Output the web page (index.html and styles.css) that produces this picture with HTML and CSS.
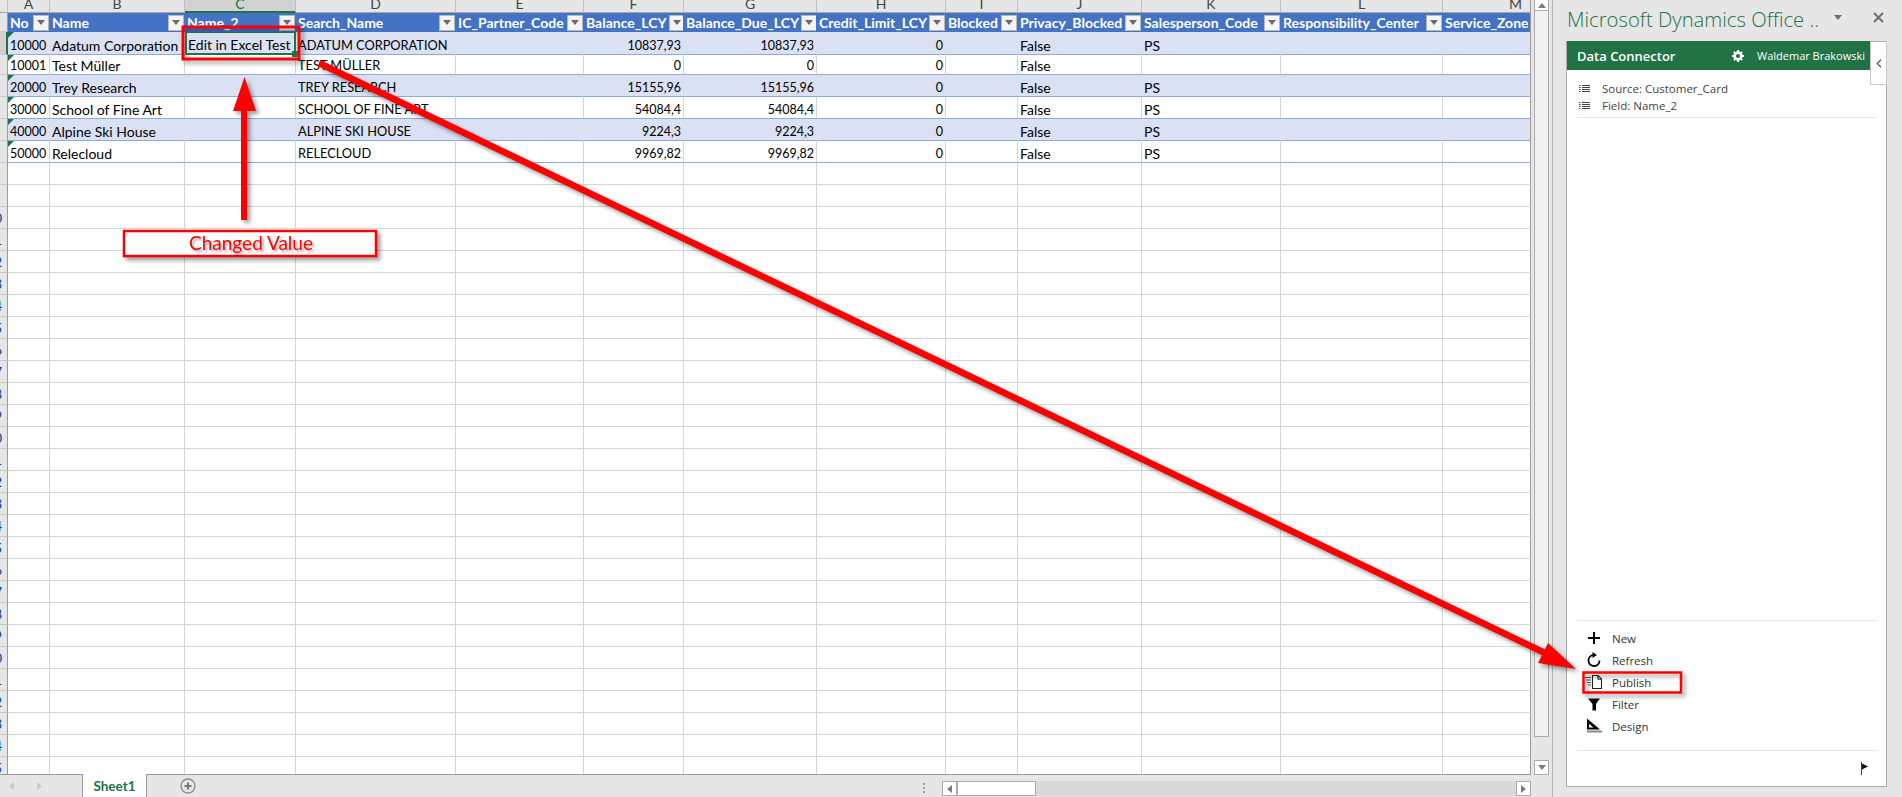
FILE: index.html
```html
<!DOCTYPE html>
<html lang="en">
<head>
<meta charset="utf-8">
<title>Edit in Excel</title>
<link rel="stylesheet" href="styles.css">
</head>
<body>
<div class="app">
  <section class="workbook">
    <div class="main">
      <div class="sheet">
        <table class="grid">
          <colgroup>
            <col class="w-rh"><col class="w-a"><col class="w-b"><col class="w-c"><col class="w-d"><col class="w-e"><col class="w-f"><col class="w-g"><col class="w-h"><col class="w-i"><col class="w-j"><col class="w-k"><col class="w-l"><col class="w-m">
          </colgroup>
          <tr class="letters">
            <th></th><th>A</th><th>B</th><th class="cur">C</th><th>D</th><th>E</th><th>F</th><th>G</th><th>H</th><th>I</th><th>J</th><th>K</th><th>L</th><th class="last-letter">M</th>
          </tr>
          <tr class="thead">
            <th class="rh"></th>
            <th><div class="hc"><span>No</span><i class="fb"></i></div></th>
            <th><div class="hc"><span>Name</span><i class="fb"></i></div></th>
            <th><div class="hc"><span>Name_2</span><i class="fb"></i></div></th>
            <th><div class="hc"><span>Search_Name</span><i class="fb"></i></div></th>
            <th><div class="hc"><span>IC_Partner_Code</span><i class="fb"></i></div></th>
            <th><div class="hc"><span>Balance_LCY</span><i class="fb"></i></div></th>
            <th><div class="hc"><span>Balance_Due_LCY</span><i class="fb"></i></div></th>
            <th><div class="hc"><span>Credit_Limit_LCY</span><i class="fb"></i></div></th>
            <th><div class="hc"><span>Blocked</span><i class="fb"></i></div></th>
            <th><div class="hc"><span>Privacy_Blocked</span><i class="fb"></i></div></th>
            <th><div class="hc"><span>Salesperson_Code</span><i class="fb"></i></div></th>
            <th><div class="hc"><span>Responsibility_Center</span><i class="fb"></i></div></th>
            <th><div class="hc"><span>Service_Zone_Code</span></div></th>
          </tr>
          <tr class="data band first">
            <th class="rh cur"></th><td class="ind">10000</td><td>Adatum Corporation</td><td class="sel">Edit in Excel Test</td><td class="cap">ADATUM CORPORATION</td><td></td><td class="n">10837,93</td><td class="n">10837,93</td><td class="n">0</td><td></td><td>False</td><td>PS</td><td></td><td></td>
          </tr>
          <tr class="data short">
            <th class="rh"></th><td class="ind">10001</td><td>Test Müller</td><td></td><td class="cap">TEST MÜLLER</td><td></td><td class="n">0</td><td class="n">0</td><td class="n">0</td><td></td><td>False</td><td></td><td></td><td></td>
          </tr>
          <tr class="data band">
            <th class="rh"></th><td class="ind">20000</td><td>Trey Research</td><td></td><td class="cap">TREY RESEARCH</td><td></td><td class="n">15155,96</td><td class="n">15155,96</td><td class="n">0</td><td></td><td>False</td><td>PS</td><td></td><td></td>
          </tr>
          <tr class="data">
            <th class="rh"></th><td class="ind">30000</td><td>School of Fine Art</td><td></td><td class="cap">SCHOOL OF FINE ART</td><td></td><td class="n">54084,4</td><td class="n">54084,4</td><td class="n">0</td><td></td><td>False</td><td>PS</td><td></td><td></td>
          </tr>
          <tr class="data band">
            <th class="rh"></th><td class="ind">40000</td><td>Alpine Ski House</td><td></td><td class="cap">ALPINE SKI HOUSE</td><td></td><td class="n">9224,3</td><td class="n">9224,3</td><td class="n">0</td><td></td><td>False</td><td>PS</td><td></td><td></td>
          </tr>
          <tr class="data">
            <th class="rh"></th><td class="ind">50000</td><td>Relecloud</td><td></td><td class="cap">RELECLOUD</td><td></td><td class="n">9969,82</td><td class="n">9969,82</td><td class="n">0</td><td></td><td>False</td><td>PS</td><td></td><td></td>
          </tr>
          <tr><th class="rh"></th><td></td><td></td><td></td><td></td><td></td><td></td><td></td><td></td><td></td><td></td><td></td><td></td><td></td></tr>
          <tr><th class="rh"></th><td></td><td></td><td></td><td></td><td></td><td></td><td></td><td></td><td></td><td></td><td></td><td></td><td></td></tr>
          <tr><th class="rh"><div><span>10</span></div></th><td></td><td></td><td></td><td></td><td></td><td></td><td></td><td></td><td></td><td></td><td></td><td></td><td></td></tr>
          <tr><th class="rh"><div><span>11</span></div></th><td></td><td></td><td></td><td></td><td></td><td></td><td></td><td></td><td></td><td></td><td></td><td></td><td></td></tr>
          <tr><th class="rh"><div><span>12</span></div></th><td></td><td></td><td></td><td></td><td></td><td></td><td></td><td></td><td></td><td></td><td></td><td></td><td></td></tr>
          <tr><th class="rh"><div><span>13</span></div></th><td></td><td></td><td></td><td></td><td></td><td></td><td></td><td></td><td></td><td></td><td></td><td></td><td></td></tr>
          <tr><th class="rh"><div><span>14</span></div></th><td></td><td></td><td></td><td></td><td></td><td></td><td></td><td></td><td></td><td></td><td></td><td></td><td></td></tr>
          <tr><th class="rh"><div><span>15</span></div></th><td></td><td></td><td></td><td></td><td></td><td></td><td></td><td></td><td></td><td></td><td></td><td></td><td></td></tr>
          <tr><th class="rh"><div><span>16</span></div></th><td></td><td></td><td></td><td></td><td></td><td></td><td></td><td></td><td></td><td></td><td></td><td></td><td></td></tr>
          <tr><th class="rh"><div><span>17</span></div></th><td></td><td></td><td></td><td></td><td></td><td></td><td></td><td></td><td></td><td></td><td></td><td></td><td></td></tr>
          <tr><th class="rh"><div><span>18</span></div></th><td></td><td></td><td></td><td></td><td></td><td></td><td></td><td></td><td></td><td></td><td></td><td></td><td></td></tr>
          <tr><th class="rh"><div><span>19</span></div></th><td></td><td></td><td></td><td></td><td></td><td></td><td></td><td></td><td></td><td></td><td></td><td></td><td></td></tr>
          <tr><th class="rh"><div><span>20</span></div></th><td></td><td></td><td></td><td></td><td></td><td></td><td></td><td></td><td></td><td></td><td></td><td></td><td></td></tr>
          <tr><th class="rh"><div><span>21</span></div></th><td></td><td></td><td></td><td></td><td></td><td></td><td></td><td></td><td></td><td></td><td></td><td></td><td></td></tr>
          <tr><th class="rh"><div><span>22</span></div></th><td></td><td></td><td></td><td></td><td></td><td></td><td></td><td></td><td></td><td></td><td></td><td></td><td></td></tr>
          <tr><th class="rh"><div><span>23</span></div></th><td></td><td></td><td></td><td></td><td></td><td></td><td></td><td></td><td></td><td></td><td></td><td></td><td></td></tr>
          <tr><th class="rh"><div><span>24</span></div></th><td></td><td></td><td></td><td></td><td></td><td></td><td></td><td></td><td></td><td></td><td></td><td></td><td></td></tr>
          <tr><th class="rh"><div><span>25</span></div></th><td></td><td></td><td></td><td></td><td></td><td></td><td></td><td></td><td></td><td></td><td></td><td></td><td></td></tr>
          <tr><th class="rh"><div><span>26</span></div></th><td></td><td></td><td></td><td></td><td></td><td></td><td></td><td></td><td></td><td></td><td></td><td></td><td></td></tr>
          <tr><th class="rh"><div><span>27</span></div></th><td></td><td></td><td></td><td></td><td></td><td></td><td></td><td></td><td></td><td></td><td></td><td></td><td></td></tr>
          <tr><th class="rh"><div><span>28</span></div></th><td></td><td></td><td></td><td></td><td></td><td></td><td></td><td></td><td></td><td></td><td></td><td></td><td></td></tr>
          <tr><th class="rh"><div><span>29</span></div></th><td></td><td></td><td></td><td></td><td></td><td></td><td></td><td></td><td></td><td></td><td></td><td></td><td></td></tr>
          <tr><th class="rh"><div><span>30</span></div></th><td></td><td></td><td></td><td></td><td></td><td></td><td></td><td></td><td></td><td></td><td></td><td></td><td></td></tr>
          <tr><th class="rh"><div><span>31</span></div></th><td></td><td></td><td></td><td></td><td></td><td></td><td></td><td></td><td></td><td></td><td></td><td></td><td></td></tr>
          <tr><th class="rh"><div><span>32</span></div></th><td></td><td></td><td></td><td></td><td></td><td></td><td></td><td></td><td></td><td></td><td></td><td></td><td></td></tr>
          <tr><th class="rh"><div><span>33</span></div></th><td></td><td></td><td></td><td></td><td></td><td></td><td></td><td></td><td></td><td></td><td></td><td></td><td></td></tr>
          <tr><th class="rh"><div><span>34</span></div></th><td></td><td></td><td></td><td></td><td></td><td></td><td></td><td></td><td></td><td></td><td></td><td></td><td></td></tr>
          <tr><th class="rh"><div><span>35</span></div></th><td></td><td></td><td></td><td></td><td></td><td></td><td></td><td></td><td></td><td></td><td></td><td></td><td></td></tr>
        </table>
      </div>
      <div class="vscroll">
        <div class="sb-btn sb-up"><i class="tri-up"></i></div>
        <div class="sb-thumb"></div>
        <div class="sb-btn sb-down"><i class="tri-down"></i></div>
      </div>
    </div>
    <div class="tabbar">
      <div class="tabnav"><i class="tri-left pale"></i><i class="tri-right pale"></i></div>
      <div class="tab">Sheet1</div>
      <div class="addsheet">
        <svg width="16" height="16" viewBox="0 0 16 16"><circle cx="8" cy="8" r="7" fill="none" stroke="#8c8c8c" stroke-width="1.3"/><path d="M4.5 8h7M8 4.5v7" stroke="#7a7a7a" stroke-width="2" fill="none"/></svg>
      </div>
      <div class="tabspacer"></div>
      <div class="dots"><i></i><i></i><i></i></div>
      <div class="hscroll">
        <div class="hs-btn"><i class="tri-left"></i></div>
        <div class="hs-thumb"></div>
        <div class="hs-track"></div>
        <div class="hs-btn"><i class="tri-right"></i></div>
      </div>
    </div>
  </section>

  <aside class="pane">
    <div class="pane-title">
      <h1>Microsoft Dynamics Office ..</h1>
      <i class="caret"></i>
      <svg class="close" width="11" height="11" viewBox="0 0 11 11"><path d="M1 1l9 9M10 1l-9 9" stroke="#6e6e6e" stroke-width="2" fill="none"/></svg>
    </div>
    <div class="card">
      <header class="card-head">
        <strong>Data Connector</strong>
        <svg class="gear" width="12" height="12" viewBox="0 0 12 12"><circle cx="6" cy="6" r="3.4" fill="none" stroke="#fff" stroke-width="2.6"/><path d="M6 0v2M6 10v2M0 6h2M10 6h2M1.8 1.8l1.4 1.4M8.8 8.8l1.4 1.4M10.2 1.8L8.8 3.2M3.2 8.8l-1.4 1.4" stroke="#fff" stroke-width="1.8"/></svg>
        <span class="user">Waldemar Brakowski</span>
      </header>
      <div class="fold"><svg width="6" height="9" viewBox="0 0 6 9"><path d="M5 .8L1.2 4.5 5 8.2" fill="none" stroke="#555" stroke-width="1.2"/></svg></div>
      <div class="meta">
        <div class="meta-row">
          <svg width="11" height="8" viewBox="0 0 11 8"><path d="M3 .5h8M3 2.5h8M3 4.5h8M3 6.5h8M0 .5h1.5M0 2.5h1.5M0 4.5h1.5M0 6.5h1.5" stroke="#444" stroke-width="1" fill="none"/></svg>
          <span>Source: Customer_Card</span>
        </div>
        <div class="meta-row">
          <svg width="11" height="8" viewBox="0 0 11 8"><path d="M3 .5h8M3 2.5h8M3 4.5h8M3 6.5h8M0 .5h1.5M0 2.5h1.5M0 4.5h1.5M0 6.5h1.5" stroke="#444" stroke-width="1" fill="none"/></svg>
          <span>Field: Name_2</span>
        </div>
      </div>
      <hr class="rule">
      <div class="card-space"></div>
      <hr class="rule">
      <ul class="actions">
        <li>
          <svg width="18" height="16" viewBox="0 0 18 16"><path d="M9 2v12M3 8h12" stroke="#000" stroke-width="2" fill="none"/></svg>
          <span>New</span>
        </li>
        <li>
          <svg width="18" height="16" viewBox="0 0 18 16"><path d="M14.5 8.500A5.500 5.500 0 1 1 8 3.100" stroke="#000" stroke-width="1.800" fill="none"/><path d="M7.500 0L12 3 7.500 6z" fill="#000"/></svg>
          <span>Refresh</span>
        </li>
        <li>
          <svg width="18" height="16" viewBox="0 0 18 16"><path d="M0 3.500h6M1 6h5M2 8.500h4M3 11h3" stroke="#555" stroke-width="1.200" fill="none"/><path d="M7.500 1.500h5.500l3.500 3.500v9.500h-9z" fill="#fff" stroke="#222" stroke-width="1.100"/><path d="M12.800 1.500v3.700h3.700" fill="none" stroke="#222" stroke-width="1"/></svg>
          <span>Publish</span>
        </li>
        <li>
          <svg width="18" height="16" viewBox="0 0 18 16"><path d="M3 2.500h12L11 8v6.500H7.500V8z" fill="#000"/></svg>
          <span>Filter</span>
        </li>
        <li>
          <svg width="18" height="16" viewBox="0 0 18 16"><path d="M2 .5v11h13z" fill="#000"/><path d="M4 6v3.500h4.500z" fill="#fff"/><path d="M2 13.500h15" stroke="#8a8a8a" stroke-width="2" fill="none"/></svg>
          <span>Design</span>
        </li>
      </ul>
      <hr class="rule">
      <footer class="card-foot">
        <svg width="7" height="13" viewBox="0 0 7 13"><path d="M.5 0v13" stroke="#68217a" stroke-width="1"/><path d="M1 1.500l6 3-6 3z" fill="#111"/></svg>
      </footer>
    </div>
  </aside>

  <svg class="overlay" width="1902" height="797" viewBox="0 0 1902 797">
    <g class="marks">
      <rect x="183" y="27" width="116" height="32" fill="none" stroke="#f00" stroke-width="3"/>
      <path d="M241 220V111h-8l11.500-34L256 111h-9v109z" fill="#f00"/>
      <path d="M319 63L1545 653" fill="none" stroke="#f00" stroke-width="6.500"/>
      <path d="M1548 643l-10 20 38 6z" fill="#f00"/>
      <rect x="124" y="231" width="252" height="25" fill="#fff" stroke="#f00" stroke-width="2.500"/>
      <rect x="1583.500" y="672.500" width="97.500" height="20" fill="none" stroke="#f00" stroke-width="2.500"/>
    </g>
    <text class="note" x="251" y="250" text-anchor="middle">Changed Value</text>
  </svg>
</div>
</body>
</html>
```
FILE: styles.css
```css
* { box-sizing: border-box; }
html, body { margin: 0; height: 100%; overflow: hidden; }
body { background: #e6e6e6; font-family: "Lato", "Liberation Sans", sans-serif; color: #000; }

.app { position: relative; display: flex; width: 1902px; height: 797px; overflow: hidden; }

/* workbook */
.workbook { width: 1553px; flex: none; display: flex; flex-direction: column; border-right: 1px solid #b4b4b4; }
.main { height: 775px; display: flex; flex: none; }
.sheet { width: 1531px; height: 775px; overflow: hidden; border-bottom: 1px solid #9a9a9a; background: #fff; flex: none; }

.grid { width: 1531px; table-layout: fixed; border-collapse: separate; border-spacing: 0; font-size: 14px; }
.w-rh { width: 8px; } .w-a { width: 42px; } .w-b { width: 135px; } .w-c { width: 111px; }
.w-d { width: 160px; } .w-e { width: 128px; } .w-f { width: 100px; } .w-g { width: 133px; }
.w-h { width: 129px; } .w-i { width: 72px; } .w-j { width: 124px; } .w-k { width: 139px; }
.w-l { width: 162px; } .w-m { width: 88px; }

.grid td, .grid th { padding: 0 2px; overflow: hidden; white-space: nowrap; font-weight: 400; }
.grid tr { height: 22px; }
.grid td { height: 22px; border-right: 1px solid #d4d4d4; border-bottom: 1px solid #d4d4d4; padding-top: 3px; line-height: 17px; }
.grid tr > :last-child { border-right: 1px solid #9a9a9a; }

/* column letters */
.letters { height: 13px !important; }
.letters th { height: 13px; background: #e6e6e6; color: #444; font-size: 14px; line-height: 8px; vertical-align: top; border-right: 1px solid #c0c0c0; border-bottom: 1px solid #a6a6a6; }
.letters th.cur { background: #d2d2d2; color: #217346; border-bottom: 2px solid #217346; }
.letters th.last-letter { text-align: left; padding-left: 66px; }

/* row header */
.grid th.rh { padding: 0; background: #e6e6e6; border-right: 1px solid #9a9a9a; border-bottom: 1px solid #c8c8c8; }
.grid th.rh.cur { background: #d2d2d2; border-right: 2px solid #217346; }
.rh div { width: 7px; display: flex; justify-content: flex-end; padding-right: 5px; overflow: hidden; font-size: 13.500px; color: #10408a; }
.rh span { flex: none; }

/* table header */
.thead { height: 19px !important; }
.thead th { height: 19px; background: #4472c4; color: #fff; font-weight: 700; padding: 0 1px 0 2px; text-align: left; }
.thead th.rh { background: #e6e6e6; }
.hc { display: flex; align-items: center; justify-content: space-between; height: 19px; overflow: hidden; }
.hc span { flex: none; }
.fb { flex: none; margin-left: 2px; width: 16px; height: 16px; background: #f4f4f4; border: 1px solid #b8b8b8; display: flex; align-items: center; justify-content: center; }
.fb::after { content: ""; border-left: 4px solid transparent; border-right: 4px solid transparent; border-top: 5px solid #6a6a6a; }

/* data rows */
.data td { border-bottom-color: #8ea9db; }
.data.short { height: 20px !important; }
.data.short td { height: 20px; line-height: 15px; padding-top: 2px; }
.data.first { height: 23px !important; }
.data.first td { height: 23px; padding-top: 4px; }
.band td { background: #dae1f3; border-right-color: #dae1f3; }
.grid td.n, .grid td.ind { font-size: 12.500px; }
.grid td.n { text-align: right; }
.grid td.cap { font-size: 12.800px; }
.ind { position: relative; }
.ind::before { content: ""; position: absolute; left: 0; top: 0; border-top: 6px solid #217346; border-right: 6px solid transparent; }
.grid td.sel { position: relative; overflow: visible; padding: 3px 1px 0; border: 2px solid #217346; border-top-width: 1px; line-height: 17px; z-index: 1; }
.sel::after { content: ""; position: absolute; right: -4px; bottom: -4px; width: 6px; height: 6px; background: #217346; }

/* vertical scrollbar */
.vscroll { width: 21px; height: 775px; padding: 0 3px 0 3px; display: flex; flex-direction: column; flex: none; background: #e6e6e6; }
.sb-btn { height: 15px; background: #fff; border: 1px solid #ababab; display: flex; align-items: center; justify-content: center; flex: none; }
.sb-up { height: 11px; border-top: 0; }
.sb-thumb { height: 726px; background: #f1f1f1; border: 1px solid #ababab; border-top: 0; flex: none; }
.sb-down { margin-top: 23px; }
.tri-up { border-left: 4px solid transparent; border-right: 4px solid transparent; border-bottom: 5px solid #7c7c7c; }
.tri-down { border-left: 4px solid transparent; border-right: 4px solid transparent; border-top: 5px solid #7c7c7c; }
.tri-left { display: block; border-top: 4.500px solid transparent; border-bottom: 4.500px solid transparent; border-right: 5px solid #7c7c7c; }
.tri-right { display: block; border-top: 4.500px solid transparent; border-bottom: 4.500px solid transparent; border-left: 5px solid #7c7c7c; }
.tri-left.pale { border-right-color: #c8c8c8; }
.tri-right.pale { border-left-color: #c8c8c8; }

/* tabs & horizontal scrollbar */
.tabbar { height: 22px; display: flex; align-items: stretch; flex: none; }
.tabnav { width: 82px; display: flex; align-items: center; padding-left: 9px; gap: 23px; flex: none; padding-bottom: 1px; }
.tab { width: 65px; flex: none; background: #fff; border-left: 1px solid #9a9a9a; border-right: 1px solid #9a9a9a; margin-top: -1px; color: #217346; font-weight: 700; font-size: 13.500px; text-align: center; line-height: 24px; }
.addsheet { width: 84px; flex: none; display: flex; align-items: center; padding: 0 0 0 33px; }
.addsheet svg { flex: none; }
.tabspacer { width: 692px; flex: none; }
.dots { width: 19px; flex: none; display: flex; flex-direction: column; gap: 2px; align-items: flex-start; padding: 8px 0 0 0; }
.dots i { width: 2px; height: 2px; background: #a0a0a0; display: block; }
.hscroll { flex: none; width: 589px; height: 15px; margin-top: 6px; display: flex; background: #d9d9d9; }
.hs-btn { width: 15px; height: 15px; background: #fff; border: 1px solid #ababab; display: flex; align-items: center; justify-content: center; flex: none; }
.hs-thumb { width: 79px; background: #fff; border: 1px solid #ababab; flex: none; }
.hs-track { flex: 1; }

/* task pane */
.pane { flex: 1; padding-left: 13px; padding-right: 15px; display: flex; flex-direction: column; min-width: 0; }
.pane-title { height: 41px; flex: none; display: flex; align-items: center; position: relative; }
.pane-title h1 { margin: 0; font-family: "Open Sans", "Noto Sans", sans-serif; font-size: 20.300px; font-weight: 300; color: #217346; white-space: nowrap; width: 263px; padding-left: 1px; padding-bottom: 3px; }
.caret { flex: none; border-left: 4.500px solid transparent; border-right: 4.500px solid transparent; border-top: 5px solid #707070; margin: 0 0 6px 5px; }
.close { flex: none; margin: 0 0 7px 31px; }

.card { position: relative; height: 746px; flex: none; background: #fff; border: 1px solid #ababab; border-top: 0; display: flex; flex-direction: column; font-family: "Open Sans", "Noto Sans", sans-serif; font-size: 11.500px; color: #444; }
.card-head { height: 29px; flex: none; background: #217346; color: #fff; display: flex; align-items: center; padding-left: 10px; margin-right: 15px; }
.card-head strong { font-size: 13px; font-weight: 600; width: 155px; flex: none; }
.gear { flex: none; }
.user { font-size: 11px; margin-left: 13px; white-space: nowrap; }
.fold { position: absolute; right: -1px; top: 0; width: 17px; height: 44px; background: #fff; border: 1px solid #c8c8c8; border-top: 1px solid #ababab; display: flex; align-items: center; justify-content: center; }

.meta { padding: 10px 0 3px 12px; flex: none; }
.meta-row { height: 17px; display: flex; align-items: center; gap: 12px; }
.meta-row svg { flex: none; }
.rule { margin: 0 10px; border: 0; border-top: 1px solid #e6e6e6; flex: none; height: 1px; width: 300px; }
.card-space { flex: 1; }
.actions { list-style: none; margin: 0; padding: 6px 0 13px 18px; flex: none; }
.actions li { height: 22px; display: flex; align-items: center; gap: 9px; color: #333; }
.actions svg { flex: none; }
.card-foot { flex: none; height: 35px; display: flex; align-items: center; justify-content: flex-end; padding: 0 18px 0 0; }

/* annotation layer drawn over the screenshot */
.overlay { position: absolute; left: 0; top: 0; pointer-events: none; }
.marks { filter: drop-shadow(3px 3px 2px rgba(0, 0, 0, .4)); }
.note { font-family: "Lato", "Liberation Sans", sans-serif; font-size: 19px; fill: #f00; filter: drop-shadow(2px 2px 1px rgba(0, 0, 0, .35)); }
```
